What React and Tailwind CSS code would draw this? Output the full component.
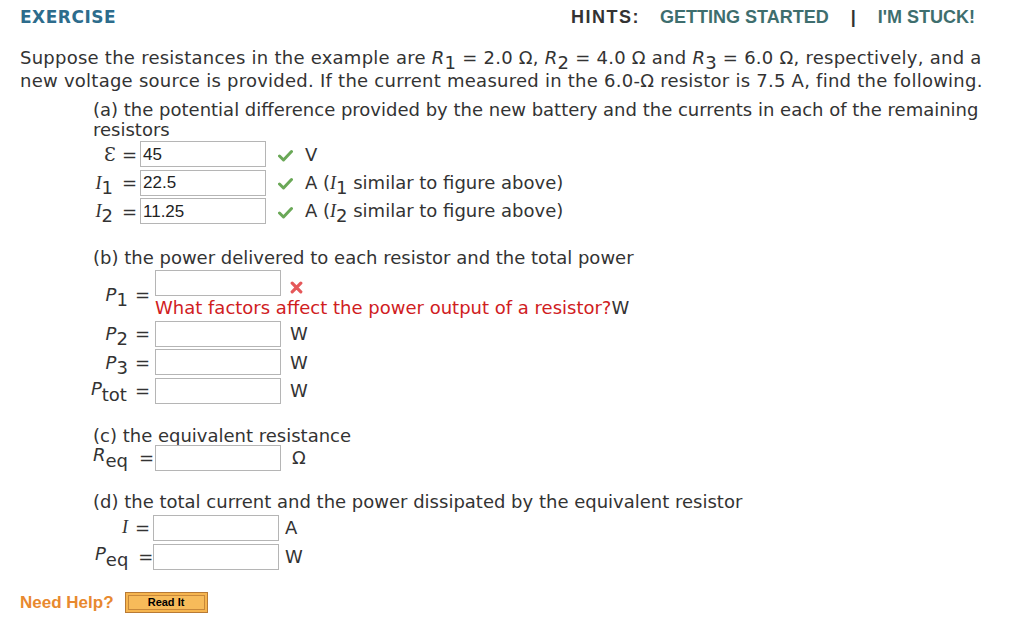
import React from "react";

const body = { fontFamily: '"DejaVu Sans", Verdana, sans-serif' };
const arial = { fontFamily: '"Liberation Sans", Arial, sans-serif' };
const serif = { fontFamily: '"Liberation Serif", serif' };

function Check() {
  return (
    <svg width="15" height="13" viewBox="0 0 15 13" className="block">
      <path d="M1.5 7 L5.5 11 L13.5 2.5" fill="none" stroke="#6aa857" strokeWidth="3" strokeLinecap="round" strokeLinejoin="round" />
    </svg>
  );
}

function Cross() {
  return (
    <svg width="13" height="13" viewBox="0 0 13 13" className="block">
      <path d="M2.2 2.2 L10.8 10.8 M10.8 2.2 L2.2 10.8" fill="none" stroke="#e5585a" strokeWidth="3.2" strokeLinecap="round" />
    </svg>
  );
}

// italic symbol with a dropped subscript
function Sym({ s, sub, isSerif }) {
  return (
    <span className="whitespace-nowrap">
      <span className="italic" style={isSerif ? serif : undefined}>{s}</span>
      {sub && <span className="relative top-[5px]">{sub}</span>}
    </span>
  );
}

function Box({ value }) {
  return (
    <div className="w-[126px] h-[26px] border border-[#b5b5b5] bg-white px-[2px] flex items-center text-[17px] text-[#222]" style={arial}>
      {value}
    </div>
  );
}

function Row({ label, labelW, value, icon, unit, unitGap }) {
  return (
    <div className="flex items-center h-[28.5px]">
      <div className={`${labelW} flex justify-end items-center pr-[3px] whitespace-nowrap`}>{label}</div>
      <Box value={value} />
      {icon}
      <span className={`${unitGap} whitespace-nowrap`}>{unit}</span>
    </div>
  );
}

export default function App() {
  return (
    <div className="w-[1024px] h-[636px] bg-white text-[#333] text-[18px]" style={body}>
      {/* header */}
      <div className="flex items-center justify-between pl-[20px] pr-[49px] pt-[5px] h-[30px]">
        <span className="text-[17px] font-bold text-[#2d6c8c] tracking-[0.5px]">EXERCISE</span>
        <div className="flex items-center text-[18px] font-bold" style={arial}>
          <span className="text-[#333] tracking-[1.5px]">HINTS:</span>
          <span className="ml-[20px] text-[#3e6e6e]">GETTING STARTED</span>
          <span className="ml-[22px] text-[#333]">|</span>
          <span className="ml-[22px] text-[#3e6e6e]">I'M STUCK!</span>
        </div>
      </div>

      {/* question */}
      <div className="pl-[20px] pr-[40px] mt-[16px] leading-[23px] tracking-[0.25px]">
        Suppose the resistances in the example are <Sym s="R" sub="1" /> = 2.0 Ω, <Sym s="R" sub="2" /> = 4.0 Ω and <Sym s="R" sub="3" /> = 6.0 Ω, respectively, and a new voltage source is provided. If the current measured in the 6.0-Ω resistor is 7.5 A, find the following.
      </div>

      <div className="pl-[93px] pr-[20px]">
        {/* (a) */}
        <div className="mt-[8px] leading-[20px]">(a) the potential difference provided by the new battery and the currents in each of the remaining resistors</div>
        <div>
          <Row labelW="w-[47px]" value="45"
            label={<><span className="text-[19px]" style={{ fontFamily: '"DejaVu Serif", serif' }}>Ɛ</span><span className="ml-[6px]">=</span></>}
            icon={<span className="ml-[12px] mt-[2px]"><Check /></span>} unit="V" unitGap="ml-[12px]" />
          <Row labelW="w-[47px]" value="22.5"
            label={<><Sym s="I" sub="1" isSerif /><span className="ml-[9px]">=</span></>}
            icon={<span className="ml-[12px] mt-[2px]"><Check /></span>} unit={<>A (<Sym s="I" sub="1" isSerif /> similar to figure above)</>} unitGap="ml-[12px]" />
          <Row labelW="w-[47px]" value="11.25"
            label={<><Sym s="I" sub="2" isSerif /><span className="ml-[9px]">=</span></>}
            icon={<span className="ml-[12px] mt-[2px]"><Check /></span>} unit={<>A (<Sym s="I" sub="2" isSerif /> similar to figure above)</>} unitGap="ml-[12px]" />
        </div>

        {/* (b) */}
        <div className="mt-[22px] leading-[20px]">(b) the power delivered to each resistor and the total power</div>
        <div className="mt-[2px] -ml-[20px]">
          <div className="flex items-center">
            <div className="w-[82px] flex justify-end items-center pr-[5px] whitespace-nowrap">
              <Sym s="P" sub="1" /><span className="ml-[7px]">=</span>
            </div>
            <div className="flex flex-col">
              <div className="flex items-center">
                <Box value="" />
                <span className="ml-[9px] mt-[10px]"><Cross /></span>
              </div>
              <div className="text-[#d0201e] leading-[24px] whitespace-nowrap">
                What factors affect the power output of a resistor?<span className="text-[#333]">W</span>
              </div>
            </div>
          </div>
          {["2", "3"].map((n) => (
            <Row key={n} labelW="w-[82px]" value=""
              label={<><Sym s="P" sub={n} /><span className="ml-[7px] mr-[2px]">=</span></>}
              unit="W" unitGap="ml-[9px]" />
          ))}
          <Row labelW="w-[82px]" value=""
            label={<><span className="italic relative -top-[2px]">P</span><span className="relative top-[4px]">tot</span><span className="ml-[8px] mr-[2px]">=</span></>}
            unit="W" unitGap="ml-[9px]" />
        </div>

        {/* (c) */}
        <div className="mt-[21px] leading-[20px]">(c) the equivalent resistance</div>
        <div className="flex items-center h-[29px] -mt-[3px]">
          <div className="w-[62px] flex items-center whitespace-nowrap">
            <span className="italic relative -top-[3px]">R</span><span className="relative top-[3px]">eq</span>
            <span className="ml-[11px]">=</span>
          </div>
          <Box value="" />
          <span className="ml-[11px]">Ω</span>
        </div>

        {/* (d) */}
        <div className="mt-[20px] leading-[20px]">(d) the total current and the power dissipated by the equivalent resistor</div>
        <div className="mt-[1px]">
          <div className="flex items-center h-[29px]">
            <div className="w-[60px] flex justify-end items-center pr-[3px] whitespace-nowrap">
              <span className="italic" style={serif}>I</span><span className="ml-[7px]">=</span>
            </div>
            <Box value="" />
            <span className="ml-[6px]">A</span>
          </div>
          <div className="flex items-center h-[29px]">
            <div className="w-[60px] flex items-center whitespace-nowrap">
              <span className="italic relative -top-[3px] ml-[2px]">P</span><span className="relative top-[3px]">eq</span>
              <span className="ml-[10px]">=</span>
            </div>
            <Box value="" />
            <span className="ml-[6px]">W</span>
          </div>
        </div>
      </div>

      {/* need help */}
      <div className="flex items-center pl-[20px] mt-[19px]" style={arial}>
        <span className="text-[17px] font-bold text-[#e8892f]">Need Help?</span>
        <button className="ml-[11px] w-[83px] h-[21px] border border-[#b87a35] bg-[#f6b54f] p-[2px]">
          <div className="w-full h-full border border-[#c8883a] bg-[#f7bb5a] flex items-center justify-center text-[11px] font-bold text-black leading-none">
            Read It
          </div>
        </button>
      </div>
    </div>
  );
}
